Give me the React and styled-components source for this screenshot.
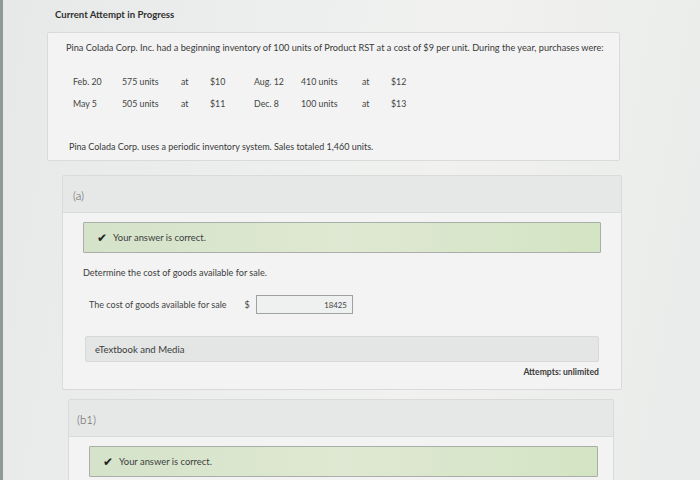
import React from 'react'
import styled, { createGlobalStyle } from 'styled-components'

const GlobalStyle = createGlobalStyle`
  html, body {
    margin: 0;
    padding: 0;
    background: #e9ebea;
  }
  body {
    font-family: Lato, "Open Sans", "Liberation Sans", sans-serif;
    color: #3a3a3a;
  }
`

const Page = styled.div`
  width: 700px;
  height: 480px;
  overflow: hidden;
  box-sizing: border-box;
  padding: 9px 80px 0 44px;
  background: linear-gradient(100deg, #e6e9e8 0%, #eef0ef 45%, #f1f2ef 60%, #e9ebea 100%);
  border-left: 3px solid #8d9a98;
`

const Title = styled.div`
  margin-left: 8px;
  font-size: 9.6px;
  font-weight: 700;
  color: #2f2f2f;
  line-height: 12px;
`

const Card = styled.div`
  margin: ${p => p.$margin || '0'};
  width: ${p => p.$width || 'auto'};
  background: #f2f3f2;
  border: 1px solid #d9dbda;
  border-radius: 2px;
`

const ProblemCard = styled(Card)`
  margin-top: 11px;
  padding: 9px 6px 7px 18px;
  width: 573px;
  box-sizing: border-box;
`

const Text = styled.div`
  font-size: ${p => p.$size || '9.2px'};
  line-height: 12px;
  color: ${p => p.$color || '#3a3a3a'};
  margin: ${p => p.$margin || '0'};
  white-space: nowrap;
`

const Purchases = styled.div`
  display: grid;
  grid-template-columns: 49px 59px 29px 44px 47px 61px 29px 30px;
  grid-auto-rows: 22px;
  align-items: center;
  margin: 16px 0 0 7px;
`

const Cell = styled.span`
  font-size: 8.8px;
  color: #444;
  white-space: nowrap;
`

const PartHeader = styled.div`
  height: 37px;
  display: flex;
  align-items: center;
  padding: ${p => p.$pad || '3px 0 0 10px'};
  background: #e5e8e6;
  border-bottom: 1px solid #d9dbda;
  font-size: 11.5px;
  font-weight: 300;
  color: #555;
  box-sizing: border-box;
`

const PartBody = styled.div`
  padding: ${p => p.$pad || '9px 20px 12px 20px'};
`

const Banner = styled.div`
  height: 31px;
  display: flex;
  align-items: center;
  gap: 6px;
  padding-left: 13px;
  background: linear-gradient(90deg, #d4e3c9 0%, #dfe8d2 50%, #d3e4c4 100%);
  border: 1px solid #a9aea8;
  border-radius: 1px;
  box-sizing: border-box;
  font-size: 9.4px;
  color: #3d3d3d;
`

const Check = styled.span`
  font-size: 12px;
  color: #1f1f1f;
  line-height: 1;
`

const CostRow = styled.div`
  display: flex;
  align-items: center;
  margin: 16px 0 0 6px;
`

const Dollar = styled.span`
  font-size: 9px;
  color: #444;
  margin: 0 6px 0 18px;
`

const Input = styled.div`
  width: 97px;
  height: 19px;
  display: flex;
  align-items: center;
  justify-content: flex-end;
  padding-right: 5px;
  box-sizing: border-box;
  background: #eef1ef;
  border: 1px solid #9da29f;
  font-size: 7.8px;
  color: #444;
`

const MediaBar = styled.div`
  margin: 22px 2px 0 2px;
  height: 24px;
  display: flex;
  align-items: center;
  padding-left: 9px;
  background: #e3e6e4;
  border: 1px solid #d6d9d7;
  border-radius: 2px;
  font-size: 9.6px;
  color: #3d3d3d;
`

const Attempts = styled.div`
  text-align: right;
  margin: 5px 2px 0 0;
  font-size: 8.6px;
  font-weight: 700;
  color: #3a3a3a;
`

const purchases = [
  ['Feb. 20', '575 units', 'at', '$10', 'Aug. 12', '410 units', 'at', '$12'],
  ['May 5', '505 units', 'at', '$11', 'Dec. 8', '100 units', 'at', '$13']
]

function CorrectBanner() {
  return (
    <Banner>
      <Check>✔</Check>
      <span>Your answer is correct.</span>
    </Banner>
  )
}

export default function App() {
  return (
    <>
      <GlobalStyle />
      <Page>
        <Title>Current Attempt in Progress</Title>

        <ProblemCard>
          <Text>
            Pina Colada Corp. Inc. had a beginning inventory of 100 units of Product RST at a cost of $9 per unit. During the year, purchases were:
          </Text>
          <Purchases>
            {purchases.map(row => row.map((c, i) => <Cell key={row[0] + i}>{c}</Cell>))}
          </Purchases>
          <Text $margin="27px 0 0 3px" $size="9px">
            Pina Colada Corp. uses a periodic inventory system. Sales totaled 1,460 units.
          </Text>
        </ProblemCard>

        <Card $margin="14px 0 0 15px" $width="558px">
          <PartHeader>(a)</PartHeader>
          <PartBody>
            <CorrectBanner />
            <Text $margin="14px 0 0 0" $color="#3d3d3d" $size="9.1px">Determine the cost of goods available for sale.</Text>
            <CostRow>
              <Text $color="#444" $size="9px">The cost of goods available for sale</Text>
              <Dollar>$</Dollar>
              <Input>18425</Input>
            </CostRow>
            <MediaBar>eTextbook and Media</MediaBar>
            <Attempts>Attempts: unlimited</Attempts>
          </PartBody>
        </Card>

        <Card $margin="9px 0 0 21px" $width="544px">
          <PartHeader $pad="3px 0 0 8px">(b1)</PartHeader>
          <PartBody $pad="9px 15px 10px 20px">
            <CorrectBanner />
          </PartBody>
        </Card>
      </Page>
    </>
  )
}
